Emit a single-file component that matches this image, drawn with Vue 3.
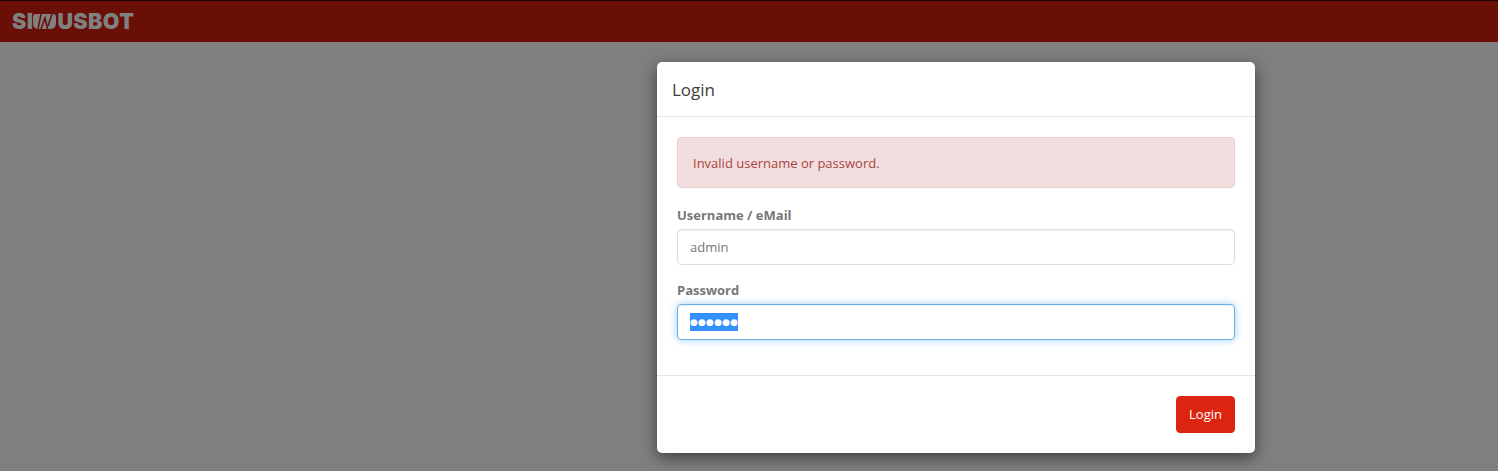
<script setup>
import { ref } from 'vue'

const username = ref('admin')
const maskedPassword = '●'.repeat(6)
</script>

<template>
  <div class="page">
    <header class="navbar">
      <div class="brand">
        <span>SI</span>
        <svg class="brand-mark" viewBox="0 0 23 15" aria-hidden="true">
          <path d="M3 0 H20 Q23 0 23 3 V9 Q23 15 17 15 H6 Q0 15 0 9 V3 Q0 0 3 0 Z" fill="#808080" />
          <path d="M8 0 L5 15 M8 15 L12 4 L14.5 15 M19 0 L15 12" stroke="#690f06" stroke-width="1.5" fill="none" />
        </svg>
        <span>USBOT</span>
      </div>
    </header>
    <main class="stage">
      <form class="modal" @submit.prevent>
        <div class="modal-header">Login</div>
        <div class="modal-body">
          <div class="alert">Invalid username or password.</div>
          <div class="field">
            <label for="user">Username / eMail</label>
            <input id="user" v-model="username" type="text" />
          </div>
          <div class="field">
            <label>Password</label>
            <div class="password-box" role="textbox" aria-label="Password">
              <span class="selected">{{ maskedPassword }}</span>
            </div>
          </div>
        </div>
        <div class="modal-footer">
          <button type="submit">Login</button>
        </div>
      </form>
    </main>
  </div>
</template>

<style>
html, body { margin: 0; overflow: hidden; }
</style>

<style scoped>
.page {
  height: 100vh;
  background: #7f7f7f;
  font-family: "Open Sans", sans-serif;
  font-size: 13px;
  display: flex;
  flex-direction: column;
}
.navbar {
  height: 41px;
  border-top: 1px solid #1a0402;
  background: #690f06;
  display: flex;
  align-items: center;
  padding-left: 12px;
  flex: none;
}
.brand {
  display: flex;
  align-items: center;
  color: #808080;
  font-family: Inter, sans-serif;
  font-weight: 900;
  font-size: 21.5px;
  letter-spacing: 0.4px;
  line-height: 1;
}
.brand-mark {
  width: 23px;
  height: 15px;
  margin: 0 1px 0 0;
}
.stage {
  padding: 20px 0 0 657px;
}
.modal {
  width: 598px;
  height: 391px;
  box-sizing: border-box;
  background: #fff;
  border-radius: 5px;
  box-shadow: 0 5px 15px rgba(0, 0, 0, 0.5);
  display: flex;
  flex-direction: column;
}
.modal-header {
  height: 55px;
  box-sizing: border-box;
  border-bottom: 1px solid #e5e5e5;
  padding: 0 15px;
  display: flex;
  align-items: center;
  font-size: 17px;
  color: #3d3d3d;
  flex: none;
}
.modal-body {
  padding: 20px 20px 0;
  flex: 1;
}
.alert {
  height: 51px;
  box-sizing: border-box;
  background: #f2dede;
  border: 1px solid #ebccd1;
  border-radius: 4px;
  color: #a94442;
  padding: 0 15px;
  display: flex;
  align-items: center;
  margin-bottom: 18px;
}
.field {
  display: flex;
  flex-direction: column;
  margin-bottom: 16px;
}
.field + .field {
  margin-top: 1px;
}
label {
  color: #777;
  font-weight: 700;
  line-height: 18px;
  margin-bottom: 5px;
}
input,
.password-box {
  height: 36px;
  box-sizing: border-box;
  width: 100%;
  border: 1px solid #ddd;
  border-radius: 4px;
  padding: 0 12px;
  color: #777;
  font: 13px "Open Sans", sans-serif;
  outline: none;
  box-shadow: inset 0 1px 1px rgba(0, 0, 0, 0.075);
}
.password-box {
  display: flex;
  align-items: center;
  border-color: #66afe9;
  box-shadow: inset 0 1px 1px rgba(0, 0, 0, 0.075), 0 0 8px rgba(102, 175, 233, 0.6);
}
.selected {
  background: #3390ff;
  color: #fff;
  font-family: "DejaVu Sans", sans-serif;
  font-size: 9px;
  line-height: 18px;
  height: 18px;
  letter-spacing: 0.2px;
  white-space: nowrap;
}
.modal-footer {
  height: 78px;
  box-sizing: border-box;
  border-top: 1px solid #e5e5e5;
  display: flex;
  justify-content: flex-end;
  align-items: flex-start;
  padding: 20px 20px 0;
  flex: none;
}
button {
  width: 59px;
  height: 37px;
  border: 1px solid #dc2510;
  border-radius: 4px;
  background: #dc2510;
  color: #fff;
  font: 13px "Open Sans", sans-serif;
  padding: 0 0 2px;
}
</style>
